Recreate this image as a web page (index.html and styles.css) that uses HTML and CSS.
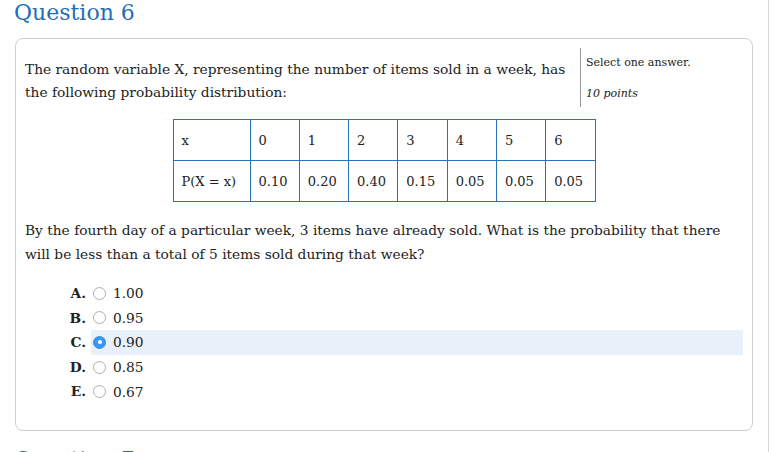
FILE: index.html
```html
<!DOCTYPE html>
<html lang="en">
<head>
    <meta charset="UTF-8">
    <meta name="viewport" content="width=device-width, initial-scale=1.0">
    <title>Question 6</title>
    <link rel="stylesheet" href="styles.css">
</head>
<body>
    <div class="page">
        <h2 class="qtitle">Question 6</h2>

        <div class="card">
            <div class="qtop">
                <p class="qtext">The random variable X, representing the number of items sold in a week, has the following probability distribution:</p>
                <div class="info">
                    <p class="hint">Select one answer.</p>
                    <p class="pts">10 points</p>
                </div>
            </div>

            <table class="dist">
                <tr>
                    <td class="lab">x</td>
                    <td>0</td>
                    <td>1</td>
                    <td>2</td>
                    <td>3</td>
                    <td>4</td>
                    <td>5</td>
                    <td>6</td>
                </tr>
                <tr>
                    <td class="lab">P(X = x)</td>
                    <td>0.10</td>
                    <td>0.20</td>
                    <td>0.40</td>
                    <td>0.15</td>
                    <td>0.05</td>
                    <td>0.05</td>
                    <td>0.05</td>
                </tr>
            </table>

            <p class="qtext2">By the fourth day of a particular week, 3 items have already sold. What is the probability that there will be less than a total of 5 items sold during that week?</p>

            <!-- opciones de respuesta -->
            <ol class="choices">
                <li class="choice"><span class="letter">A.</span><span class="opt"><span class="radio"></span>1.00</span></li>
                <li class="choice"><span class="letter">B.</span><span class="opt"><span class="radio"></span>0.95</span></li>
                <li class="choice selected"><span class="letter">C.</span><span class="opt"><span class="radio"></span>0.90</span></li>
                <li class="choice"><span class="letter">D.</span><span class="opt"><span class="radio"></span>0.85</span></li>
                <li class="choice"><span class="letter">E.</span><span class="opt"><span class="radio"></span>0.67</span></li>
            </ol>
        </div>

        <h2 class="qtitle">Question 7</h2>
    </div>
</body>
</html>
```

FILE: styles.css
```css
* {
    box-sizing: border-box;
    margin: 0;
    padding: 0;
}
body {
    font-family: "DejaVu Serif", Georgia, serif;
    font-size: 13.75px;
    color: #222;
    background-color: #fff;
}
.page {
    width: 769px;
    height: 452px;
    overflow: hidden;
    border-right: 1px solid #d6d6d6;
    padding-left: 14px;
}
.qtitle {
    font-size: 22px;
    font-weight: normal;
    line-height: 26px;
    color: #1d6fb8;
}
.card {
    width: 738px;
    margin: 12px 0 16px 1px;
    border: 1px solid #cfcfcf;
    border-radius: 8px;
    padding: 9px 9px 26px 9px;
}
.qtop {
    display: flex;
}
.qtext {
    flex: 1;
    padding-top: 10px;
    padding-right: 2px;
    line-height: 23px;
}
.info {
    width: 163px;
    height: 59px;
    border-left: 1px solid #999;
    padding-left: 5px;
    font-size: 11px;
    line-height: 14px;
}
.hint {
    margin-top: 8px;
}
.pts {
    margin-top: 17px;
    font-style: italic;
}
.dist {
    margin: 12px auto 0 auto;
    width: 423px;
    table-layout: fixed;
    border-collapse: collapse;
    font-size: 13px;
}
.dist td {
    height: 41px;
    padding: 0 8px;
    border: 1px solid #2a72b6;
    white-space: nowrap;
}
.dist td.lab {
    width: 77px;
}
.qtext2 {
    margin-top: 16px;
    line-height: 24px;
}
.choices {
    list-style: none;
    margin-top: 15px;
}
.choice {
    display: flex;
    height: 24.6px;
}
.letter {
    width: 66px;
    padding-right: 5px;
    text-align: right;
    font-weight: bold;
    line-height: 24.6px;
}
.opt {
    flex: 1;
    display: flex;
    align-items: center;
    padding-left: 2px;
}
.selected .opt {
    background-color: #e8f0fa;
}
.radio {
    width: 13px;
    height: 13px;
    margin-right: 7px;
    border: 1px solid #b0b0b0;
    border-radius: 50%;
    background-color: #fff;
    display: flex;
    align-items: center;
    justify-content: center;
}
.selected .radio {
    background-color: #3b95f5;
    border-color: #358ded;
}
.selected .radio::after {
    content: "";
    width: 4px;
    height: 4px;
    border-radius: 50%;
    background-color: #fff;
}
```
